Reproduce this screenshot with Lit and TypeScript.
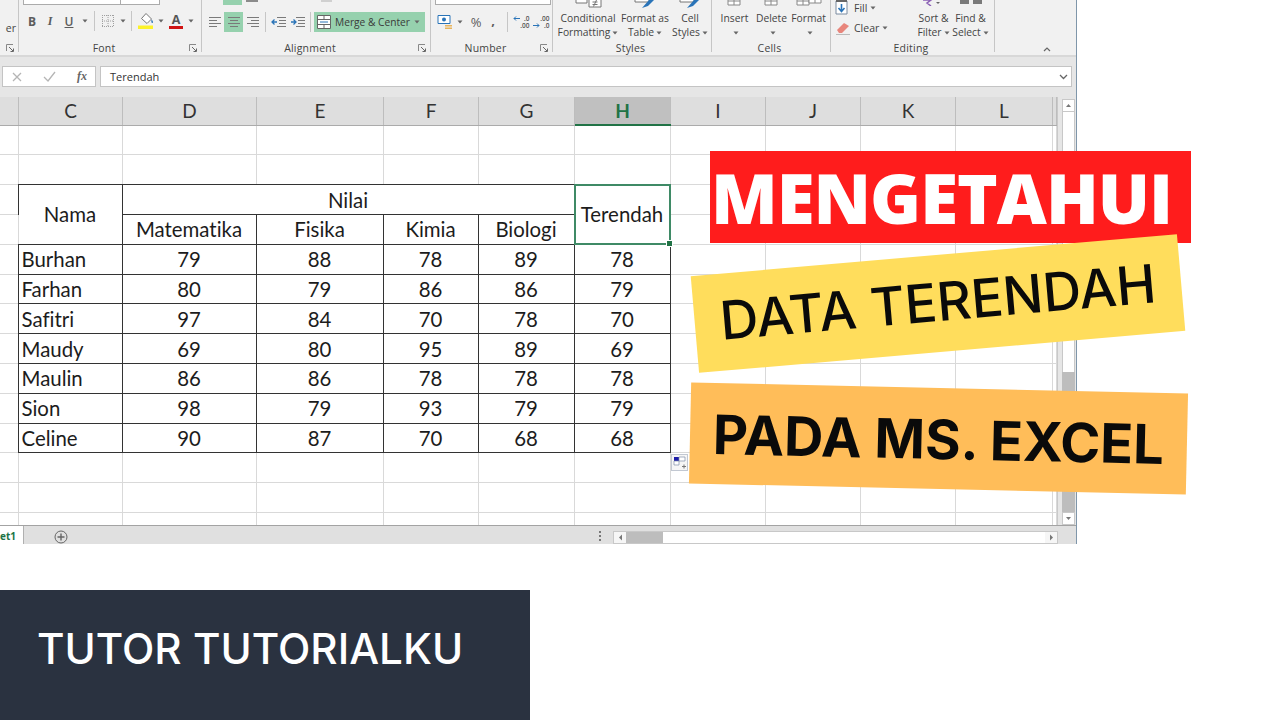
import { LitElement, html, css, svg } from 'lit';
import { customElement } from 'lit/decorators.js';
import { classMap } from 'lit/directives/class-map.js';

const COLS = ['', 'C', 'D', 'E', 'F', 'G', 'H', 'I', 'J', 'K', 'L', ''];

const STUDENTS: [string, number, number, number, number, number][] = [
  ['Burhan', 79, 88, 78, 89, 78],
  ['Farhan', 80, 79, 86, 86, 79],
  ['Safitri', 97, 84, 70, 78, 70],
  ['Maudy', 69, 80, 95, 89, 69],
  ['Maulin', 86, 86, 78, 78, 78],
  ['Sion', 98, 79, 93, 79, 79],
  ['Celine', 90, 87, 70, 68, 68],
];

const caret = html`<svg class="caret" viewBox="0 0 6 4"><path d="M0.5 0.5h5L3 3.5z" fill="#666" /></svg>`;

const launcher = html`<svg class="launcher" viewBox="0 0 9 9" fill="none">
  <path d="M0.5 7V0.5H7" stroke="#888" />
  <path d="M3 3l4 4M7.5 4.5v3h-3" stroke="#666" />
</svg>`;

// horizontal bars, offsets per line give the alignment
const lines = (rows: [number, number][]) => html`<svg class="ico" viewBox="0 0 16 16" fill="none" stroke="#7a7a7a">
  ${rows.map(([x, w], i) => svg`<path d="M${x} ${3.5 + i * 3}h${w}" />`)}
</svg>`;

const indent = (back: boolean) => html`<svg class="ico" viewBox="0 0 16 16" fill="none">
  <path d="M6 3.5h9M8 6.5h7M8 9.5h7M6 12.5h9" stroke="#7a7a7a" />
  ${back
    ? svg`<path d="M6 8H1M3.5 5.5L1 8l2.5 2.5" stroke="#2a74b8" stroke-width="1.3" />`
    : svg`<path d="M1 8h5M3.5 5.5L6 8l-2.5 2.5" stroke="#2a74b8" stroke-width="1.3" />`}
</svg>`;

@customElement('app-root')
export class AppRoot extends LitElement {
  static styles = css`
    :host {
      display: block;
      width: 1280px;
      height: 720px;
      background: #fff;
      overflow: hidden;
      font-family: 'Open Sans', sans-serif;
    }
    .page {
      position: relative;
      display: flex;
      flex-direction: column;
      height: 720px;
    }

    /* excel window */
    .win {
      width: 1077px;
      height: 544px;
      box-sizing: border-box;
      border-right: 1px solid #7f96aa;
      background: #e6e6e6;
      display: flex;
      flex-direction: column;
      overflow: hidden;
      flex: none;
    }

    /* ribbon */
    .ribbon {
      height: 55px;
      flex: none;
      background: #f1f1f1;
      border-bottom: 2px solid #d8d8d8;
      display: flex;
      font-size: 10.3px;
      color: #444;
    }
    .group {
      height: 52px;
      box-sizing: border-box;
      border-right: 1px solid #c6c6c6;
      display: flex;
      flex-direction: column;
      flex: none;
    }
    .g-clip { width: 19px; }
    .g-font { width: 183px; }
    .g-align { width: 229px; }
    .g-number { width: 122px; }
    .g-styles { width: 159px; }
    .g-cells { width: 119px; }
    .g-edit { width: 164px; }
    .g-body {
      height: 39px;
      overflow: hidden;
      flex: none;
    }
    .g-foot {
      flex: 1;
      display: flex;
      align-items: center;
      padding: 5px 3px 0 0;
      min-height: 0;
    }
    .g-name {
      flex: 1;
      text-align: center;
      font-size: 10.5px;
      letter-spacing: 0.2px;
      line-height: 14px;
    }
    .launcher {
      width: 9px;
      height: 9px;
      flex: none;
    }
    .painter {
      text-align: right;
      padding: 21px 2px 0 0;
      font-size: 10.5px;
      line-height: 14px;
    }
    .top {
      display: flex;
      height: 5px;
      padding-left: 4px;
    }
    .row {
      display: flex;
      align-items: center;
      height: 20px;
      margin-top: 7px;
      padding-left: 4px;
    }
    .row.up { margin-top: 6px; }
    .row.tight { padding-left: 3px; }
    .font-name,
    .font-size,
    .num-format {
      height: 4px;
      background: #fff;
      border: 1px solid #ababab;
      border-top: 0;
    }
    .font-name { width: 96px; }
    .font-size { width: 38px; border-left: 0; }
    .num-format { width: 114px; }
    .slot {
      flex: none;
      width: 19px;
      height: 20px;
      display: flex;
      align-items: center;
      justify-content: center;
      color: #5c5c5c;
    }
    .w8 { width: 8px; }
    .w10 { width: 10px; }
    .w12 { width: 12px; }
    .w14 { width: 14px; }
    .w18 { width: 18px; }
    .w20 { width: 20px; }
    .w22 { width: 22px; }
    .on { background: #96d1ae; }
    .sep {
      flex: none;
      width: 1px;
      height: 20px;
      margin: 0 3px;
      background: #c6c6c6;
    }
    .sep.wide { margin-left: 7px; }
    .b { font-weight: 700; font-size: 12px; }
    .i { font-style: italic; font-weight: 600; font-size: 12px; font-family: 'Liberation Serif', serif; }
    .u { text-decoration: underline; font-weight: 600; font-size: 12px; }
    .pct { font-size: 13px; }
    .comma { font-size: 13px; font-weight: 700; margin-top: -5px; }
    .a-color {
      font-size: 12.5px;
      font-weight: 700;
      line-height: 13px;
      color: #555;
      border-bottom: 3px solid #d01414;
      padding: 0 3px;
    }
    .caret {
      width: 6px;
      height: 4px;
      flex: none;
    }
    .ico {
      width: 16px;
      height: 16px;
      flex: none;
    }
    .dec {
      display: grid;
      grid-template-columns: 7px 10px;
      align-items: center;
      font-size: 6.5px;
      line-height: 7px;
      color: #555;
      font-weight: 600;
    }
    .dec span { text-align: right; }
    .dec svg { width: 7px; height: 5px; }
    .merge {
      flex: none;
      width: 111px;
      height: 20px;
      background: #96d1ae;
      display: flex;
      align-items: center;
      gap: 3px;
      padding: 0 5px 0 2px;
      box-sizing: border-box;
      font-size: 10.2px;
      color: #3a3a3a;
    }
    .merge span { flex: 1; white-space: nowrap; }
    .top-on { width: 19px; height: 5px; background: #96d1ae; margin-left: 17px; }
    .top-grey { width: 12px; height: 2px; background: #8b8b8b; margin: 0 0 0 4px; }
    .top-wrap { width: 11px; height: 2px; background: #d0d0d0; margin-left: 63px; }

    .bigs { display: flex; padding-left: 4px; }
    .big {
      flex: none;
      text-align: center;
      line-height: 14px;
      font-size: 10.3px;
      white-space: nowrap;
    }
    .big .cap {
      height: 11px;
      display: flex;
      justify-content: center;
      align-items: flex-start;
      overflow: hidden;
    }
    .big .caret { margin-left: 2px; vertical-align: 1px; }
    .w62 { width: 62px; }
    .w52 { width: 52px; }
    .w38 { width: 38px; }
    .w37 { width: 37px; }
    .side { flex: none; width: 80px; }
    .side-row {
      display: flex;
      align-items: center;
      gap: 3px;
      height: 16px;
      font-size: 10.5px;
    }
    .side-row + .side-row { margin-top: 4px; }
    .collapse {
      flex: 1;
      display: flex;
      align-items: flex-end;
      justify-content: flex-end;
      padding: 0 25px 3px 0;
    }

    /* formula bar */
    .formula {
      height: 21px;
      flex: none;
      margin: 9px 4px 10px 2px;
      display: flex;
      gap: 4px;
    }
    .fx-box,
    .fx-input {
      background: #fff;
      border: 1px solid #c4c4c4;
      box-sizing: border-box;
      display: flex;
      align-items: center;
    }
    .fx-box {
      width: 94px;
      flex: none;
      padding-left: 9px;
      gap: 21px;
    }
    .fx-box i {
      font-family: 'Liberation Serif', serif;
      font-size: 12px;
      font-weight: 700;
      color: #666;
    }
    .fx-input {
      flex: 1;
      padding: 0 3px 0 9px;
      font-size: 11px;
      color: #333;
      justify-content: space-between;
    }

    /* sheet */
    .body {
      flex: 1;
      min-height: 0;
      display: flex;
    }
    .sheet {
      width: 1057px;
      flex: none;
      display: flex;
      flex-direction: column;
      background: #fff;
      overflow: hidden;
    }
    .cols,
    .grid {
      display: grid;
      grid-template-columns: 18.5px 104px 134px 127px 95px 96px 96px 95px 95px 95px 97px 4.5px;
    }
    .cols {
      height: 28.6px;
      flex: none;
      background: #dedede;
      font-family: Lato, sans-serif;
      font-size: 19px;
      color: #333;
    }
    .col {
      display: flex;
      align-items: center;
      justify-content: center;
      box-shadow: inset -1px 0 0 #bdbdbd;
      border-bottom: 1px solid #ababab;
      box-sizing: border-box;
    }
    .col.sel {
      background: #c0c0c0;
      color: #217346;
      font-weight: 700;
      border-bottom: 2px solid #217346;
    }
    .grid {
      grid-auto-rows: 29.8px;
      flex: 1;
      overflow: hidden;
      font-family: Lato, sans-serif;
      font-size: 20.4px;
      font-variant-ligatures: none;
      color: #1c1c1c;
    }
    .c {
      box-sizing: border-box;
      border-right: 1px solid #d9d9d9;
      border-bottom: 1px solid #d9d9d9;
      display: flex;
      align-items: center;
      justify-content: center;
      position: relative;
      white-space: nowrap;
    }
    .t {
      border: 1px solid #333;
      margin: -1px 0 0 -1px;
    }
    .name { justify-content: flex-start; padding-left: 3px; }
    .s2 { grid-row: span 2; }
    .s4 { grid-column: span 4; }
    .cur {
      border: 2px solid #3f8a66;
      margin: -1px 0 0 -1px;
      z-index: 1;
    }
    .handle {
      position: absolute;
      right: -4px;
      bottom: -4px;
      width: 5px;
      height: 5px;
      background: #217346;
      border: 1px solid #fff;
    }
    .paste {
      position: absolute;
      left: 671px;
      top: 454px;
      width: 17px;
      height: 17px;
      box-sizing: border-box;
      background: #f6f6f6;
      border: 1px solid #c2c8d2;
    }
    .paste svg { display: block; width: 15px; height: 15px; }

    /* vertical scrollbar */
    .vbar {
      flex: 1;
      padding: 2px 1px 0 5px;
      display: flex;
      flex-direction: column;
      box-shadow: inset 1px 0 0 #c9c9c9;
    }
    .sb-btn {
      height: 13px;
      flex: none;
      background: #fff;
      border: 1px solid #c8c8c8;
      box-sizing: border-box;
      display: flex;
      align-items: center;
      justify-content: center;
    }
    .v-track {
      height: 260px;
      flex: none;
      background: #fff;
      border: solid #c8c8c8;
      border-width: 0 1px;
    }
    .v-thumb {
      flex: 1;
      background: #bdbdbd;
    }

    /* tab bar */
    .tabs {
      height: 19px;
      flex: none;
      box-sizing: border-box;
      background: #e0e0e0;
      border-top: 1px solid #a3a3a3;
      display: flex;
      align-items: center;
    }
    .tab {
      width: 24px;
      height: 100%;
      background: #fff;
      border-right: 1px solid #b0b0b0;
      box-sizing: border-box;
      white-space: nowrap;
      font-size: 10px;
      font-weight: 700;
      line-height: 21px;
      color: #217346;
      flex: none;
    }
    .add {
      width: 14px;
      height: 14px;
      flex: none;
      margin: 3px 0 0 30px;
    }
    .dots {
      width: 2px;
      height: 10px;
      flex: none;
      margin: 2px 0 0 531px;
      background-image: linear-gradient(#777 50%, transparent 50%);
      background-size: 2px 4px;
    }
    .hbar {
      flex: none;
      width: 445px;
      height: 13px;
      margin: 5px 0 0 12px;
      display: flex;
      background: #fff;
      border: 1px solid #c8c8c8;
      box-sizing: border-box;
    }
    .h-btn {
      flex: none;
      width: 12px;
      display: flex;
      align-items: center;
      justify-content: center;
      background: #f6f6f6;
    }
    .h-thumb { flex: none; width: 37px; background: #bdbdbd; }
    .h-track { flex: 1; background: #fff; }
    .sb-ico { width: 5px; height: 7px; }

    /* thumbnail stickers over the sheet */
    .sticker {
      position: absolute;
      display: flex;
      align-items: center;
      justify-content: center;
      white-space: nowrap;
      box-sizing: border-box;
    }
    .red {
      left: 710px;
      top: 151px;
      width: 481px;
      height: 92px;
      padding-right: 18px;
      background: #ff1c1c;
      color: #fff;
      font-family: 'Open Sans', sans-serif;
      font-weight: 800;
      font-size: 69px;
      letter-spacing: -1px;
    }
    .yellow {
      left: 694px;
      top: 255px;
      width: 488px;
      height: 97px;
      padding-bottom: 3px;
      transform: rotate(-4.95deg);
      background: #ffdd5c;
      color: #0a0a0a;
      font-family: Inter, sans-serif;
      font-weight: 500;
      font-size: 53px;
    }
    .orange {
      left: 689.5px;
      top: 387.5px;
      width: 497px;
      height: 101px;
      transform: rotate(1.27deg);
      background: #ffbd59;
      color: #0a0a0a;
      font-family: Inter, sans-serif;
      font-weight: 700;
      font-size: 54.3px;
    }

    /* channel banner */
    .banner {
      margin-top: 46px;
      width: 530px;
      height: 130px;
      flex: none;
      background: #2a3240;
      color: #fff;
      display: flex;
      align-items: center;
      padding: 0 0 14px 37px;
      box-sizing: border-box;
      font-family: Inter, sans-serif;
      font-weight: 500;
      font-size: 42.2px;
    }
  `;

  renderRibbon() {
    return html`
      <div class="ribbon">
        <div class="group g-clip">
          <div class="g-body"><div class="painter">er</div></div>
          <div class="g-foot"><span class="g-name"></span>${launcher}</div>
        </div>

        <div class="group g-font">
          <div class="g-body">
            <div class="top"><div class="font-name"></div><div class="font-size"></div></div>
            <div class="row up">
              <span class="slot w18 b">B</span>
              <span class="slot w18 i">I</span>
              <span class="slot w20 u">U</span>
              <span class="slot w12">${caret}</span>
              <span class="sep"></span>
              <span class="slot w20">
                <svg class="ico" viewBox="0 0 16 16" fill="none" stroke="#a0a0a0" stroke-dasharray="1 1">
                  <path d="M2 2.5h12M2 8h12M2 13.5h12M2.5 2v12M8 2v12M13.5 2v12" />
                </svg>
              </span>
              <span class="slot w10">${caret}</span>
              <span class="sep"></span>
              <span class="slot w22">
                <svg width="18" height="18" viewBox="0 0 18 18" fill="none">
                  <path d="M9 1.500l5.500 5.500-4.500 4.500-5.500-5z" fill="#fff" stroke="#777" />
                  <path d="M14.500 7.500c1.500 1.500 2 3 1 3.500s-1.500-1-1-3.500z" fill="#2a74b8" />
                  <path d="M1 13.500h15V17H1z" fill="#fcf22a" />
                </svg>
              </span>
              <span class="slot w8">${caret}</span>
              <span class="slot w22"><span class="a-color">A</span></span>
              <span class="slot w8">${caret}</span>
            </div>
          </div>
          <div class="g-foot"><span class="g-name">Font</span>${launcher}</div>
        </div>

        <div class="group g-align">
          <div class="g-body">
            <div class="top">
              <div class="top-on"></div>
              <div class="top-grey"></div>
              <div class="top-wrap"></div>
            </div>
            <div class="row tight">
              <span class="slot">${lines([[2, 12], [2, 8], [2, 12], [2, 8]])}</span>
              <span class="slot on">${lines([[2, 12], [4, 8], [2, 12], [4, 8]])}</span>
              <span class="slot">${lines([[2, 12], [6, 8], [2, 12], [6, 8]])}</span>
              <span class="sep"></span>
              <span class="slot">${indent(true)}</span>
              <span class="slot">${indent(false)}</span>
              <span class="sep"></span>
              <div class="merge">
                <svg class="ico" viewBox="0 0 16 16" fill="#fff" stroke="#666">
                  <path d="M1.500 1.500h13v13h-13zM1.500 5.500h13M1.500 10.500h13M8 1.500v4M8 10.500v4" />
                  <path d="M4 8h8" stroke="#2a74b8" />
                </svg>
                <span>Merge &amp; Center</span>${caret}
              </div>
            </div>
          </div>
          <div class="g-foot"><span class="g-name">Alignment</span>${launcher}</div>
        </div>

        <div class="group g-number">
          <div class="g-body">
            <div class="top"><div class="num-format"></div></div>
            <div class="row">
              <span class="slot">
                <svg class="ico" viewBox="0 0 16 16" fill="none">
                  <path d="M1 1.500h12v8H1z" fill="#fff" stroke="#2a74b8" />
                  <circle cx="7" cy="5.500" r="2" fill="#2a74b8" />
                  <path d="M8 11h7v1.500H8zM8 13.500h7V15H8z" fill="#e8b45c" />
                </svg>
              </span>
              <span class="slot w12">${caret}</span>
              <span class="slot w20 pct">%</span>
              <span class="slot w14 comma">,</span>
              <span class="sep wide"></span>
              <span class="slot w20">
                <span class="dec">
                  <svg viewBox="0 0 7 5" fill="none"><path d="M7 2.500H1M3 0.500l-2 2 2 2" stroke="#2a74b8" /></svg>
                  <span>.0</span>
                  <i></i>
                  <span>.00</span>
                </span>
              </span>
              <span class="slot w20">
                <span class="dec">
                  <i></i>
                  <span>.00</span>
                  <svg viewBox="0 0 7 5" fill="none"><path d="M0 2.500h6M4 0.500l2 2-2 2" stroke="#2a74b8" /></svg>
                  <span>.0</span>
                </span>
              </span>
            </div>
          </div>
          <div class="g-foot"><span class="g-name">Number</span>${launcher}</div>
        </div>

        <div class="group g-styles">
          <div class="g-body">
            <div class="bigs">
              <div class="big w62">
                <div class="cap">
                  <svg width="28" height="8" viewBox="0 0 28 8" fill="#fff" stroke="#777">
                    <path d="M2 -3h11v6H2zM15 -3h12v10H15z" />
                    <path d="M18.500 2h5M18.500 4.500h5M22.500 0l-3 6.500" />
                  </svg>
                </div>
                Conditional<br />Formatting${caret}
              </div>
              <div class="big w52">
                <div class="cap">
                  <svg width="22" height="8" viewBox="0 0 22 8">
                    <path d="M1 -3h14v5H1z" fill="#fff" stroke="#777" />
                    <path d="M15 0h5l-6 6-6 2z" fill="#2a74b8" />
                  </svg>
                </div>
                Format as<br />Table${caret}
              </div>
              <div class="big w38">
                <div class="cap">
                  <svg width="22" height="8" viewBox="0 0 22 8">
                    <path d="M1 -3h14v5H1z" fill="#fff" stroke="#777" />
                    <path d="M15 0h5l-6 6-6 2z" fill="#2a74b8" />
                  </svg>
                </div>
                Cell<br />Styles${caret}
              </div>
            </div>
          </div>
          <div class="g-foot"><span class="g-name">Styles</span></div>
        </div>

        <div class="group g-cells">
          <div class="g-body">
            <div class="bigs">
              ${['Insert', 'Delete', 'Format'].map(
                (label, i) => html`
                  <div class="big w37">
                    <div class="cap">
                      <svg width="${i === 2 ? 26 : 15}" height="6" viewBox="0 0 ${i === 2 ? 26 : 15} 6" fill="#fff" stroke="#888">
                        <path d="M1 -3h12v8H1zM7 -3v8M1 1h12" />
                        ${i === 2 ? svg`<path d="M13 -3h12v6H13zM19 -3v6" />` : ''}
                      </svg>
                    </div>
                    ${label}<br />${caret}
                  </div>
                `,
              )}
            </div>
          </div>
          <div class="g-foot"><span class="g-name">Cells</span></div>
        </div>

        <div class="group g-edit">
          <div class="g-body">
            <div class="bigs">
              <div class="side">
                <div class="side-row">
                  <svg class="ico" viewBox="0 0 16 16">
                    <path d="M1 1h11v13H1z" fill="#fff" stroke="#7a8ba0" />
                    <path d="M1 -1h11v3H1z" fill="#666" />
                    <path d="M6.500 4v7M3.500 8l3 3.500 3-3.500" fill="none" stroke="#2a74b8" stroke-width="1.600" />
                  </svg>
                  Fill${caret}
                </div>
                <div class="side-row">
                  <svg class="ico" viewBox="0 0 16 16">
                    <path d="M2 10l7-7 5 3-7 7H4z" fill="#e8867c" />
                    <path d="M1 14.500h14" stroke="#bbb" />
                  </svg>
                  Clear${caret}
                </div>
              </div>
              <div class="big w37">
                <div class="cap">
                  <svg width="28" height="6" viewBox="0 0 28 6" fill="none">
                    <path d="M3 0h8L7 3l4 3" stroke="#8a5fb5" stroke-width="1.500" />
                    <path d="M16 2h4l-2 2z" fill="#666" />
                  </svg>
                </div>
                Sort &amp;<br />Filter${caret}
              </div>
              <div class="big w37">
                <div class="cap">
                  <svg width="24" height="4" viewBox="0 0 24 4"><path d="M1 0h9v4H1zM14 0h9v4h-9z" fill="#7a7a7a" /></svg>
                </div>
                Find &amp;<br />Select${caret}
              </div>
            </div>
          </div>
          <div class="g-foot"><span class="g-name">Editing</span></div>
        </div>

        <div class="collapse">
          <svg width="8" height="5" viewBox="0 0 8 5" fill="none"><path d="M1 4l3-3 3 3" stroke="#666" stroke-width="1.200" /></svg>
        </div>
      </div>
    `;
  }

  renderGrid() {
    const blank = (n: number) => Array.from({ length: n }, () => html`<div class="c"></div>`);
    const tail = blank(5);
    return html`
      <div class="grid">
        ${blank(24)}

        ${blank(1)}
        <div class="c t s2">Nama</div>
        <div class="c t s4">Nilai</div>
        <div class="c cur s2">Terendah<span class="handle"></span></div>
        ${tail}

        ${blank(1)}
        ${['Matematika', 'Fisika', 'Kimia', 'Biologi'].map((h) => html`<div class="c t">${h}</div>`)}
        ${tail}

        ${STUDENTS.map(
          ([name, ...scores]) => html`
            ${blank(1)}
            <div class="c t name">${name}</div>
            ${scores.map((v) => html`<div class="c t">${v}</div>`)}
            ${tail}
          `,
        )}

        ${blank(36)}
      </div>
    `;
  }

  render() {
    return html`
      <div class="page">
        <div class="win">
          ${this.renderRibbon()}

          <div class="formula">
            <div class="fx-box">
              <svg width="10" height="10" viewBox="0 0 10 10"><path d="M1 1l8 8M9 1l-8 8" stroke="#b5b5b5" stroke-width="1.300" /></svg>
              <svg width="13" height="11" viewBox="0 0 13 11" fill="none"><path d="M1 6l4 4 7-9" stroke="#b5b5b5" stroke-width="1.300" /></svg>
              <i>fx</i>
            </div>
            <div class="fx-input">
              Terendah
              <svg width="9" height="6" viewBox="0 0 9 6" fill="none"><path d="M1 1l3.500 3.500L8 1" stroke="#666" stroke-width="1.300" /></svg>
            </div>
          </div>

          <div class="body">
            <div class="sheet">
              <div class="cols">
                ${COLS.map(
                  (c) => html`<div class=${classMap({ col: true, sel: c === 'H' })}>${c}</div>`,
                )}
              </div>
              ${this.renderGrid()}
            </div>
            <div class="vbar">
              <div class="sb-btn">
                <svg class="sb-ico" viewBox="0 0 5 7"><path d="M0 5h5L2.500 2z" fill="#777" /></svg>
              </div>
              <div class="v-track"></div>
              <div class="v-thumb"></div>
              <div class="sb-btn">
                <svg class="sb-ico" viewBox="0 0 5 7"><path d="M0 2h5L2.500 5z" fill="#777" /></svg>
              </div>
            </div>
          </div>

          <div class="tabs">
            <div class="tab">et1</div>
            <svg class="add" viewBox="0 0 14 14" fill="none" stroke="#666">
              <circle cx="7" cy="7" r="6" />
              <path d="M7 3.500v7M3.500 7h7" stroke-width="1.400" />
            </svg>
            <div class="dots"></div>
            <div class="hbar">
              <div class="h-btn"><svg class="sb-ico" viewBox="0 0 5 7"><path d="M4 0.500v6L1 3.500z" fill="#777" /></svg></div>
              <div class="h-thumb"></div>
              <div class="h-track"></div>
              <div class="h-btn"><svg class="sb-ico" viewBox="0 0 5 7"><path d="M1 0.500v6L4 3.500z" fill="#777" /></svg></div>
            </div>
          </div>
        </div>

        <div class="paste">
          <svg viewBox="0 0 15 15">
            <path d="M2 2h5v4H2z" fill="#1c1ca8" />
            <path d="M7 2h6v4H7zM2 6h5v4H2z" fill="#fff" stroke="#7f8ca8" stroke-width="0.700" />
            <path d="M10 11.500h4M12 9.500v4" stroke="#777" />
          </svg>
        </div>

        <div class="sticker red">MENGETAHUI</div>
        <div class="sticker yellow">DATA TERENDAH</div>
        <div class="sticker orange">PADA MS. EXCEL</div>

        <div class="banner">TUTOR TUTORIALKU</div>
      </div>
    `;
  }
}
